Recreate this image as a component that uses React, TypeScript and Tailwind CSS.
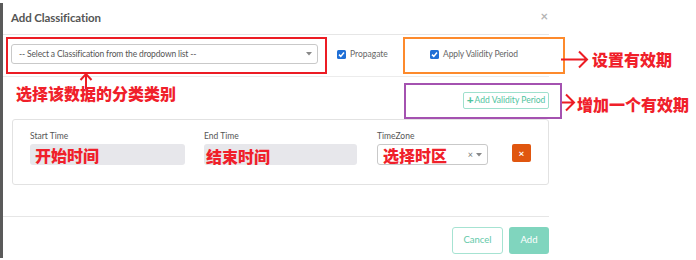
import React from "react";

const font = "font-['Lato','Noto_Sans','Noto_Sans_CJK_SC',sans-serif]";
const cjk = "font-['Noto_Sans_CJK_SC','Noto_Sans',sans-serif]";

function Check() {
  return (
    <svg width="9" height="9" viewBox="0 0 9 9" className="shrink-0">
      <rect x="0" y="0" width="9" height="9" rx="1.5" fill="#1f6fd6" />
      <path d="M2 4.6 L3.8 6.4 L7 2.6" stroke="#fff" strokeWidth="1.5" fill="none" />
    </svg>
  );
}

function Caret() {
  return (
    <svg width="6" height="4" viewBox="0 0 6 4">
      <path d="M0 0 L6 0 L3 3.5 Z" fill="#888" />
    </svg>
  );
}

export default function App() {
  return (
    <div className={`relative w-[696px] h-[260px] bg-white overflow-hidden ${font}`}>
      <div className="flex">
        <div className="w-[3px] mt-[3px] h-[255px] bg-[#5a5a5a] shrink-0" />
        <div className="w-[546px] flex flex-col">
          {/* header */}
          <div className="h-[35px] border-b border-[#e6e6e6] flex items-center justify-between pl-[8px] pr-[1px]">
            <span className="text-[11.5px] font-bold text-[#555] mt-[1px] tracking-[-0.1px]">Add Classification</span>
            <span className="text-[13px] font-bold text-[#b5b5b5] leading-none -mt-[2px]">×</span>
          </div>
          {/* row 1 */}
          <div className="h-[42px] border-b border-[#ececec] flex items-start pt-[9px] pl-[8px]">
            <div className="w-[307px] h-[20px] border border-[#c9c9c9] rounded-[3px] flex items-center justify-between pl-[7px] pr-[5px]">
              <span className="text-[8.5px] text-[#555] tracking-[-0.15px]">-- Select a Classification from the dropdown list --</span>
              <Caret />
            </div>
            <div className="ml-[19px] w-[93px] h-[20px] flex items-center gap-[4px]">
              <Check />
              <span className="text-[8.5px] text-[#666]">Propagate</span>
            </div>
            <div className="h-[20px] flex items-center gap-[4px]">
              <Check />
              <span className="text-[8.5px] text-[#666] tracking-[-0.1px]">Apply Validity Period</span>
            </div>
          </div>
          {/* row 2 */}
          <div className="h-[42px] flex justify-end items-start pt-[15px]">
            <div className="h-[17px] w-[86px] border border-[#9fe0cd] rounded-[2px] flex items-center justify-center gap-[1px] text-[#4fc39e]">
              <span className="text-[12px] font-black leading-none -mt-[1px]">+</span>
              <span className="text-[8.5px]">Add Validity Period</span>
            </div>
          </div>
          {/* card */}
          <div className="ml-[9px] h-[66px] border border-[#e2e2e2] rounded-[3px] flex pl-[17px] pt-[9px]">
            <div className="w-[155px] flex flex-col">
              <span className="text-[8.5px] text-[#555] leading-[14px] h-[15px]">Start Time</span>
              <div className="h-[21px] bg-[#e7e7eb] rounded-[3px] flex items-center pl-[5px]">
                <span className={`${cjk} text-[16px] font-black text-[#f0202a] leading-none mt-[1px]`}>开始时间</span>
              </div>
            </div>
            <div className="ml-[19px] w-[153px] flex flex-col">
              <span className="text-[8.5px] text-[#555] leading-[14px] h-[15px]">End Time</span>
              <div className="h-[21px] bg-[#e7e7eb] rounded-[3px] flex items-center pl-[2px]">
                <span className={`${cjk} text-[16px] font-black text-[#f0202a] leading-none mt-[2px]`}>结束时间</span>
              </div>
            </div>
            <div className="ml-[20px] w-[111px] flex flex-col">
              <span className="text-[8.5px] text-[#555] leading-[14px] h-[15px]">TimeZone</span>
              <div className="h-[21px] border border-[#c9c9c9] rounded-[3px] flex items-center pl-[5px] pr-[5px]">
                <span className={`${cjk} text-[16px] font-black text-[#f0202a] leading-none mt-[1px]`}>选择时区</span>
                <span className="ml-auto text-[9px] text-[#777] leading-none">×</span>
                <span className="ml-[3px]"><Caret /></span>
              </div>
            </div>
            <div className="ml-[24px] mt-[15px] w-[19px] h-[18px] bg-[#e0560f] rounded-[2px] flex items-center justify-center">
              <span className="text-[10px] font-bold text-white leading-none">×</span>
            </div>
          </div>
          {/* footer */}
          <div className="mt-[31px] border-t border-[#e6e6e6] pt-[10px] flex justify-end gap-[6px]">
            <div className="w-[51px] h-[27px] border border-[#a6e3d2] rounded-[3px] flex items-center justify-center text-[9.5px] text-[#63c9a9]">
              Cancel
            </div>
            <div className="w-[40px] h-[27px] bg-[#80d5be] rounded-[3px] flex items-center justify-center text-[9.5px] text-white">
              Add
            </div>
          </div>
        </div>
      </div>

      {/* annotations */}
      <div className="absolute left-[6px] top-[37px] w-[321px] h-[37px] border-2 border-[#ec1c24]" />
      <svg className="absolute left-[79px] top-[73px]" width="14" height="16" viewBox="0 0 14 16">
        <path d="M7 1 L7 16 M1.5 7 L7 1 L12.5 7" stroke="#ec1c24" strokeWidth="2" fill="none" />
      </svg>
      <div className={`absolute left-[16px] top-[83px] ${cjk} text-[16px] font-black text-[#f0202a] leading-[20px]`}>选择该数据的分类类别</div>

      <div className="absolute left-[403px] top-[37px] w-[162px] h-[37px] border-2 border-[#fd8a2c]" />
      <svg className="absolute left-[561px] top-[50px]" width="28" height="19" viewBox="0 0 28 19">
        <path d="M0 9.5 L26 9.5 M18 1.5 L26 9.5 L18 17.5" stroke="#ec1c24" strokeWidth="2" fill="none" />
      </svg>
      <div className={`absolute left-[592px] top-[49px] ${cjk} text-[16px] font-black text-[#f0202a] leading-[20px]`}>设置有效期</div>

      <div className="absolute left-[404px] top-[83px] w-[158px] h-[36px] border-2 border-[#a452b0]" />
      <svg className="absolute left-[562px] top-[93px]" width="14" height="19" viewBox="0 0 14 19">
        <path d="M0 9.5 L12 9.5 M4 1.5 L12 9.5 L4 17.5" stroke="#ec1c24" strokeWidth="2" fill="none" />
      </svg>
      <div className={`absolute left-[577px] top-[94px] ${cjk} text-[16px] font-black text-[#f0202a] leading-[20px]`}>增加一个有效期</div>
    </div>
  );
}
